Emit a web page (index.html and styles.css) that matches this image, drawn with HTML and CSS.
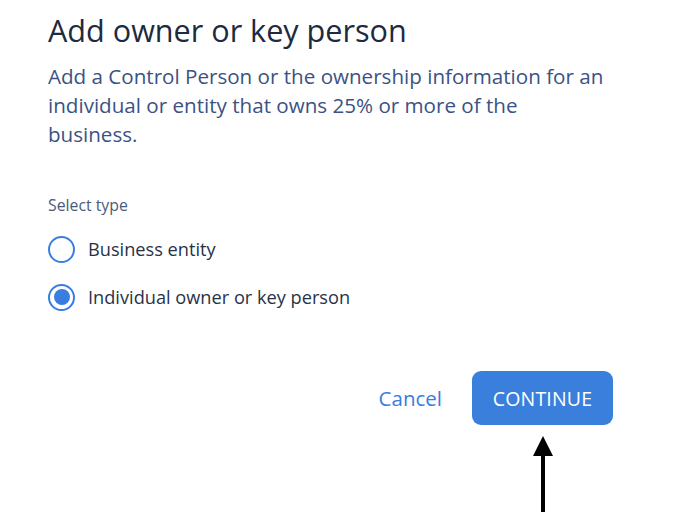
FILE: index.html
```html
<!DOCTYPE html>
<html>
<head>
<meta charset="utf-8">
<link rel="stylesheet" href="styles.css">
</head>
<body>
<div class="dialog">
  <h1 class="title">Add owner or key person</h1>
  <p class="desc">Add a Control Person or the ownership information for an individual or entity that owns 25% or more of the business.</p>
  <div class="field-label">Select type</div>
  <div class="options">
    <label class="option"><span class="radio"></span><span class="option-text">Business entity</span></label>
    <label class="option"><span class="radio checked"></span><span class="option-text">Individual owner or key person</span></label>
  </div>
  <div class="actions">
    <button class="btn-cancel">Cancel</button>
    <div class="continue-wrap">
      <button class="btn-continue">CONTINUE</button>
      <div class="arrow">
        <svg width="24" height="76" viewBox="0 0 24 76"><polygon points="12,0 2,20 22,20" fill="#000"/><rect x="10" y="18" width="4" height="58" fill="#000"/></svg>
      </div>
    </div>
  </div>
</div>
</body>
</html>
```
FILE: styles.css
```css
html, body {
  margin: 0;
  padding: 0;
  background: #fff;
}
body {
  font-family: "Open Sans", "Noto Sans", sans-serif;
  width: 674px;
  height: 512px;
  overflow: hidden;
}
.dialog {
  padding: 9px 0 0 48px;
  width: 562px;
}
.title {
  margin: 0;
  font-size: 30.6px;
  font-weight: 400;
  line-height: 42px;
  color: #1e2a40;
}
.desc {
  margin: 11px 0 0 0;
  font-size: 20.6px;
  line-height: 29px;
  color: #3b5283;
}
.field-label {
  margin-top: 46px;
  font-size: 15.8px;
  line-height: 20px;
  color: #4a5b7b;
}
.options {
  display: flex;
  flex-direction: column;
  gap: 20px;
  margin-top: 20px;
}
.option {
  display: flex;
  align-items: center;
  gap: 13px;
  height: 28px;
}
.radio {
  box-sizing: border-box;
  width: 27px;
  height: 27px;
  border: 2px solid #3a7de0;
  border-radius: 50%;
  display: flex;
  align-items: center;
  justify-content: center;
}
.radio.checked::after {
  content: "";
  width: 16px;
  height: 16px;
  border-radius: 50%;
  background: #3a7de0;
}
.option-text {
  font-size: 18.2px;
  color: #283247;
}
.actions {
  display: flex;
  justify-content: flex-end;
  align-items: flex-start;
  gap: 30px;
  margin-top: 60px;
  width: 565px;
}
.btn-cancel {
  background: none;
  border: none;
  padding: 0;
  margin-top: 13px;
  font-family: inherit;
  font-size: 20.5px;
  color: #3a7de0;
}
.continue-wrap {
  display: flex;
  flex-direction: column;
  align-items: center;
}
.btn-continue {
  width: 141px;
  height: 54px;
  border: none;
  border-radius: 9px;
  background: #3a7fdb;
  color: #fff;
  font-family: inherit;
  font-size: 19.5px;
  letter-spacing: 0.2px;
}
.arrow {
  margin-top: 11px;
  margin-left: 0;
  height: 76px;
}
.arrow svg { display: block; }
```
